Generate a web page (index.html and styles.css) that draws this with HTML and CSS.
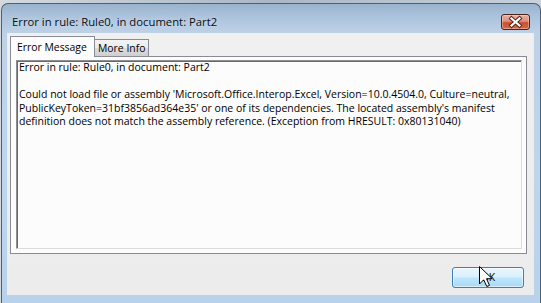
FILE: index.html
```html
<!DOCTYPE html>
<html>
<head>
<meta charset="utf-8">
<link rel="stylesheet" href="styles.css">
</head>
<body>
<div class="window">
  <div class="titlebar">
    <span class="title">Error in rule: Rule0, in document: Part2</span>
    <div class="close">
      <svg width="29" height="16" viewBox="0 0 29 16">
        <path d="M10.5 4.5 L18.5 11.5 M18.5 4.5 L10.5 11.5" stroke="#5b2a20" stroke-width="4.2" stroke-linecap="square" fill="none"/>
        <path d="M10.5 4.5 L18.5 11.5 M18.5 4.5 L10.5 11.5" stroke="#ffffff" stroke-width="2.2" stroke-linecap="square" fill="none"/>
      </svg>
    </div>
  </div>
  <div class="client">
    <div class="tabs">
      <div class="tab active">Error Message</div>
      <div class="tab">More Info</div>
    </div>
    <div class="panel">
      <div class="textbox">
        <p>Error in rule: Rule0, in document: Part2</p>
        <p>Could not load file or assembly 'Microsoft.Office.Interop.Excel, Version=10.0.4504.0, Culture=neutral,<br>PublicKeyToken=31bf3856ad364e35' or one of its dependencies. The located assembly's manifest<br>definition does not match the assembly reference. (Exception from HRESULT: 0x80131040)</p>
      </div>
    </div>
    <div class="footer">
      <div class="ok">OK</div>
    </div>
  </div>
</div>
<svg class="cursor" width="15" height="22" viewBox="0 0 15 22">
  <path d="M0.5 0.5 L0.5 18 L4.7 13.8 L7.8 20.5 L10.5 19.4 L7.5 12.7 L13.2 12.7 Z" fill="#ffffff" stroke="#000000" stroke-width="1" stroke-linejoin="miter"/>
</svg>
</body>
</html>
```
FILE: styles.css
```css
* { box-sizing: border-box; }
html, body { margin: 0; padding: 0; }
body {
  width: 541px;
  height: 303px;
  overflow: hidden;
  position: relative;
  background: linear-gradient(90deg, #d3d9df 0%, #a9b7c6 50%, #c9d1da 100%);
  font-family: "Open Sans", "Noto Sans", sans-serif;
  color: #000;
}
.window {
  margin: 3px 0 0 1px;
  width: 540px;
  height: 300px;
  border: 1px solid #4f6074;
  border-bottom: none;
  border-radius: 7px 7px 0 0;
  background: linear-gradient(180deg, #9ab3cd 0px, #aac2db 12px, #bdd2e7 29px, #bed5ec 60%, #b8d2ec 100%);
  display: flex;
  flex-direction: column;
  padding: 0 7px 8px 6px;
}
.titlebar {
  height: 29px;
  display: flex;
  align-items: flex-start;
  flex: none;
}
.title {
  margin: 10px 0 0 4px;
  font-size: 11.3px;
  line-height: 15px;
  color: #0b0f14;
  text-shadow: 0 0 6px rgba(255,255,255,0.7);
  white-space: nowrap;
}
.close {
  margin: 10px 3px 0 auto;
  width: 29px;
  height: 16px;
  border: 1px solid #4a241c;
  border-radius: 3px;
  background: linear-gradient(180deg, #eab0a0 0%, #dc8f7b 45%, #c8512f 55%, #d66a45 100%);
  box-shadow: inset 0 0 0 1px rgba(255,220,210,0.45);
  overflow: hidden;
}
.close svg { display: block; margin: -1px 0 0 -1px; }
.client {
  flex: 1;
  background: linear-gradient(180deg, #f0f0f0 0%, #ececec 100%);
  display: flex;
  flex-direction: column;
  padding: 3px 6px 0 2px;
  box-shadow: -1px 0 0 #e4eef8, 1px 0 0 #e4eef8;
}
.tabs {
  display: flex;
  align-items: flex-start;
  height: 21px;
  margin-bottom: -1px;
  flex: none;
}
.tab {
  font-size: 10.4px;
  line-height: 16px;
  height: 17px;
  margin-top: 3px;
  width: 54px;
  border: 1px solid #898c95;
  border-left: none;
  border-bottom: none;
  background: linear-gradient(180deg, #f3f3f3 0%, #ebebeb 50%, #dddddd 51%, #cfcfcf 100%);
  padding-left: 3px;
  white-space: nowrap;
}
.tab.active {
  margin-top: 0;
  height: 21px;
  width: 85px;
  border-left: 1px solid #898c95;
  background: #fcfcfc;
  padding: 2px 0 0 6px;
  position: relative;
  z-index: 2;
}
.panel {
  height: 198px;
  flex: none;
  border: 1px solid #898c95;
  background: #fcfcfc;
  padding: 3px 4px 4px 5px;
  display: flex;
}
.textbox {
  flex: 1;
  border: 1px solid;
  border-color: #8e8e8e #dcdcdc #dcdcdc #8e8e8e;
  box-shadow: inset 1px 1px 0 #6a6a6a;
  background: #fcfcfc;
  padding: 0 1px 0 2px;
  font-size: 10.5px;
  line-height: 13.5px;
  white-space: nowrap;
  overflow: hidden;
}
.textbox p { margin: 0 0 13.5px 0; }
.footer {
  flex: 1;
  display: flex;
  justify-content: flex-end;
  align-items: flex-start;
}
.ok {
  margin: 13px 3px 0 0;
  width: 72px;
  height: 21px;
  border: 1px solid #3c7fb1;
  border-radius: 3px;
  background: linear-gradient(180deg, #eaf6fd 0%, #d9f0fc 48%, #bee6fd 52%, #a7d9f5 100%);
  box-shadow: inset 0 0 0 1px rgba(255,255,255,0.55);
  font-size: 10.4px;
  line-height: 19px;
  text-align: center;
}
.cursor {
  position: absolute;
  left: 479px;
  top: 266px;
}
```
